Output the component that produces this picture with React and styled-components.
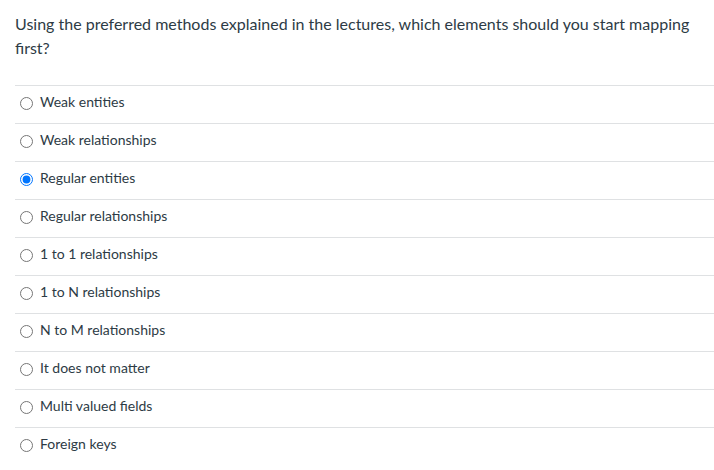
import { useState } from 'react';
import styled, { createGlobalStyle } from 'styled-components';

const options = [
  'Weak entities',
  'Weak relationships',
  'Regular entities',
  'Regular relationships',
  '1 to 1 relationships',
  '1 to N relationships',
  'N to M relationships',
  'It does not matter',
  'Multi valued fields',
  'Foreign keys',
];

const GlobalStyle = createGlobalStyle`
  body {
    margin: 0;
    background: #ffffff;
    font-family: Lato, "Open Sans", sans-serif;
    color: #2d3b45;
  }
`;

const QuestionBox = styled.div`
  padding: 12px 0 0 15px;
`;

const QuestionText = styled.p`
  margin: 0 0 25px;
  font-size: 16px;
  line-height: 24px;
  color: #2d3b45;
`;

const AnswerList = styled.div`
  display: flex;
  flex-direction: column;
`;

const AnswerRow = styled.label`
  display: flex;
  align-items: center;
  border-top: 1px solid #dfe1e3;
  padding: 6px 0 11px;
  font-size: 14px;
  line-height: 20px;
  color: #2d3b45;
  cursor: pointer;
`;

const Radio = styled.input`
  width: 13px;
  height: 13px;
  margin: 2px 7px 0 5px;
  flex-shrink: 0;
`;

const App = () => {
  const [selected, setSelected] = useState(2);

  return (
    <>
      <GlobalStyle />
      <QuestionBox>
        <QuestionText>
          Using the preferred methods explained in the lectures, which elements should you start mapping first?
        </QuestionText>
        <AnswerList>
          {options.map((option, i) => (
            <AnswerRow key={option}>
              <Radio
                type='radio'
                name='answer'
                checked={selected === i}
                onChange={() => setSelected(i)}
              />
              {option}
            </AnswerRow>
          ))}
        </AnswerList>
      </QuestionBox>
    </>
  );
};

export default App;
